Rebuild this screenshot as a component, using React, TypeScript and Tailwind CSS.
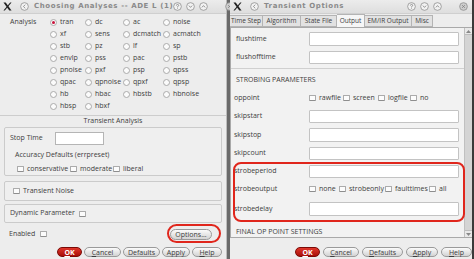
import React from 'react';

const font = "font-['Open_Sans','Noto_Sans',sans-serif]";

function XLogo() {
  return (
    <svg width="9" height="9" viewBox="0 0 10 10" className="shrink-0">
      <path d="M0.5 0.5 L3 0.5 L9.5 9.5 L7 9.5 Z" fill="#222" />
      <path d="M9.5 0.5 L8 0.5 L0.5 9.5 L2 9.5 Z" fill="#222" />
    </svg>
  );
}

function CircleIcon({ kind }: { kind: 'left' | 'help' | 'down' | 'up' | 'close' }) {
  const filled = kind === 'close';
  return (
    <svg width="9" height="9" viewBox="0 0 10 10" className="shrink-0">
      <circle cx="5" cy="5" r="4.3" fill={filled ? '#cdcdcd' : '#f2f2f2'} stroke="#919191" strokeWidth="0.9" />
      {kind === 'left' && <path d="M5.8 3 L3.8 5 L5.8 7" fill="none" stroke="#808080" strokeWidth="0.9" />}
      {kind === 'help' && (
        <>
          <path d="M3.7 4 Q3.8 2.7 5 2.7 Q6.3 2.7 6.3 3.9 Q6.3 4.7 5 5.2 L5 6" fill="none" stroke="#808080" strokeWidth="0.9" />
          <circle cx="5" cy="7.2" r="0.5" fill="#808080" />
        </>
      )}
      {kind === 'down' && <path d="M3.2 4 L5 6 L6.8 4" fill="none" stroke="#808080" strokeWidth="0.9" />}
      {kind === 'up' && <path d="M3.2 6 L5 4 L6.8 6" fill="none" stroke="#808080" strokeWidth="0.9" />}
      {kind === 'close' && <path d="M3.5 3.5 L6.5 6.5 M6.5 3.5 L3.5 6.5" fill="none" stroke="#808080" strokeWidth="0.9" />}
    </svg>
  );
}

function Radio({ on = false }: { on?: boolean }) {
  return (
    <span className="w-[7px] h-[7px] rounded-full border border-[#ababab] bg-[#fbfbfb] flex items-center justify-center shrink-0">
      {on && <span className="w-[3px] h-[3px] rounded-full bg-[#c8143c]" />}
    </span>
  );
}

function Check() {
  return <span className="w-[7px] h-[6px] border border-[#ababab] border-b-[#8e8e8e] bg-[#fcfcfc] rounded-[1px] shrink-0" />;
}

function Btn({ label, u, red = false, w }: { label: string; u?: number; red?: boolean; w: string }) {
  const text =
    u === undefined ? (
      label
    ) : (
      <>
        {label.slice(0, u)}
        <span className="underline">{label[u]}</span>
        {label.slice(u + 1)}
      </>
    );
  return (
    <div
      className={`${w} h-[10px] rounded-full flex items-center justify-center text-[7px] leading-none ${
        red
          ? 'bg-gradient-to-b from-[#e0352a] to-[#a80d08] border border-[#7a0a06] text-white font-bold'
          : 'bg-gradient-to-b from-[#fbfbfb] to-[#d3d3d3] border border-[#9a9a9a] text-[#3d3d3d]'
      }`}
    >
      {text}
    </div>
  );
}

function TitleBar({ title }: { title: string }) {
  return (
    <div className="h-[14px] flex items-center bg-gradient-to-b from-[#ececec] to-[#dedede] border-b border-[#cfcfcf] pl-[3px] pr-[4px]">
      <XLogo />
      <div className="ml-[8px]">
        <CircleIcon kind="left" />
      </div>
      <span className="ml-[5px] text-[7px] font-bold tracking-[0.6px] text-[#8a8a8a] font-['DejaVu_Sans',sans-serif] whitespace-nowrap">
        {title}
      </span>
      <div className="flex-1" />
      <div className="flex gap-[4px]">
        <CircleIcon kind="help" />
        <CircleIcon kind="down" />
        <CircleIcon kind="up" />
      </div>
      <div className="ml-[17px]">
        <CircleIcon kind="close" />
      </div>
    </div>
  );
}

const analyses = [
  ['tran', 'dc', 'ac', 'noise'],
  ['xf', 'sens', 'dcmatch', 'acmatch'],
  ['stb', 'pz', 'lf', 'sp'],
  ['envlp', 'pss', 'pac', 'pstb'],
  ['pnoise', 'pxf', 'psp', 'qpss'],
  ['qpac', 'qpnoise', 'qpxf', 'qpsp'],
  ['hb', 'hbac', 'hbstb', 'hbnoise'],
  ['hbsp', 'hbxf'],
];
const colW = ['w-[35px]', 'w-[38px]', 'w-[40px]', 'w-[50px]'];

function LeftWindow() {
  return (
    <div className="relative w-[227px] h-full bg-[#ededed] border-r border-[#bdbdbd] flex flex-col text-[#3d3d3d]">
      <TitleBar title="Choosing Analyses -- ADE L (1)" />
      <div className="flex pt-[2px]">
        <div className="w-[48px] pl-[10px] h-[12px] flex items-center text-[7px]">Analysis</div>
        <div className="flex flex-col">
          {analyses.map((row, r) => (
            <div key={r} className="flex h-[12px] items-center">
              {row.map((a, c) => (
                <div key={a} className={`${colW[c]} flex items-center gap-[3px] pl-[2px] text-[7px]`}>
                  <Radio on={a === 'tran'} />
                  <span>{a}</span>
                </div>
              ))}
            </div>
          ))}
        </div>
      </div>
      <div className="mt-[3px] border-t border-[#cdcdcd]" />
      <div className="h-[10px] flex items-center justify-center text-[7px]">Transient Analysis</div>
      <div className="mx-[4px] mt-[1px] h-[49px] border border-[#cbcbcb] rounded-[2px] bg-[#efefef] flex flex-col">
        <div className="mt-[4px] h-[13px] flex items-center">
          <span className="w-[50px] pl-[5px] text-[7px]">Stop Time</span>
          <div className="w-[49px] h-[13px] bg-white border border-[#b5b5b5]" />
        </div>
        <div className="mt-[5px] h-[10px] pl-[10px] flex items-center text-[7px]">Accuracy Defaults (errpreset)</div>
        <div className="mt-[4px] h-[10px] flex items-center text-[7px] pl-[12px]">
          <Check />
          <span className="ml-[3px] w-[43px]">conservative</span>
          <Check />
          <span className="ml-[3px] w-[33px]">moderate</span>
          <Check />
          <span className="ml-[3px]">liberal</span>
        </div>
      </div>
      <div className="mx-[4px] mt-[5px] h-[20px] border border-[#cbcbcb] rounded-[2px] bg-[#efefef] flex items-center pl-[8px] text-[7px]">
        <Check />
        <span className="ml-[3px]">Transient Noise</span>
      </div>
      <div className="mx-[4px] mt-[3px] h-[19px] border border-[#cbcbcb] rounded-[2px] bg-[#efefef] flex items-center pl-[5px] text-[7px]">
        <span className="w-[69px]">Dynamic Parameter</span>
        <Check />
      </div>
      <div className="mt-[5px] h-[12px] flex items-center text-[7px] pl-[9px] pr-[14px]">
        <span className="w-[31px]">Enabled</span>
        <Check />
        <div className="flex-1" />
        <Btn label="Options..." w="w-[42px] h-[11px]" />
      </div>
      <div className="mt-[7px] flex items-center justify-end gap-[2px] pr-[4px]">
        <Btn label="OK" u={0} red w="w-[25px]" />
        <Btn label="Cancel" u={0} w="w-[37px]" />
        <Btn label="Defaults" w="w-[37px]" />
        <Btn label="Apply" w="w-[28px]" />
        <Btn label="Help" u={0} w="w-[30px]" />
      </div>
      <div className="absolute left-[167px] top-[224px] w-[54px] h-[19px] rounded-full border-2 border-[#e0261c]" />
    </div>
  );
}

const tabs = [
  { t: 'Time Step', w: 'w-[33px]' },
  { t: 'Algorithm', w: 'w-[38px]' },
  { t: 'State File', w: 'w-[36px]' },
  { t: 'Output', w: 'w-[28px]', active: true },
  { t: 'EM/IR Output', w: 'w-[47px]' },
  { t: 'Misc', w: 'w-[21px]' },
];

function Field({ label, h = 'h-[13px]', mt, pl = 'pl-[3px]' }: { label: string; h?: string; mt: string; pl?: string }) {
  return (
    <div className={`${mt} ${h} flex items-center`}>
      <span className={`w-[78px] ${pl} text-[7px]`}>{label}</span>
      <div className={`w-[150px] ${h} bg-white border border-[#c3c3c3] rounded-[1px]`} />
    </div>
  );
}

function RightWindow() {
  return (
    <div className="relative flex-1 h-full bg-[#ededed] flex flex-col text-[#3d3d3d] border-r-2 border-[#3a3a3a]">
      <TitleBar title="Transient Options" />
      <div className="h-[13px] flex items-end">
        {tabs.map((tb) => (
          <div
            key={tb.t}
            className={`${tb.w} shrink-0 whitespace-nowrap flex items-center justify-center text-[6.5px] border border-[#b4b4b4] border-l-0 ${
              tb.active ? 'h-[13px] bg-[#f6f6f6] border-b-0' : 'h-[12px] bg-[#e2e2e2]'
            }`}
          >
            {tb.t}
          </div>
        ))}
      </div>
      <div className="h-[211px] flex border-t border-[#a9a9a9] border-l border-b bg-[#f2f2f2]">
        <div className="flex-1 flex flex-col">
          <Field label="flushtime" h="h-[14px]" mt="mt-[4px]" pl="pl-[5px]" />
          <Field label="flushofftime" mt="mt-[5px]" pl="pl-[5px]" />
          <div className="mt-[4px] border-t border-[#d0d0d0]" />
          <div className="mt-[6px] h-[10px] flex items-center pl-[5px] text-[7px]">STROBING PARAMETERS</div>
          <div className="mt-[8px] h-[10px] flex items-center text-[7px]">
            <span className="w-[78px] pl-[3px]">oppoint</span>
            {['rawfile', 'screen', 'logfile', 'no'].map((it, i) => (
              <div key={it} className={`${['w-[34px]', 'w-[35px]', 'w-[32px]', 'w-[20px]'][i]} flex items-center gap-[3px]`}>
                <Check />
                <span>{it}</span>
              </div>
            ))}
          </div>
          <Field label="skipstart" mt="mt-[7px]" />
          <Field label="skipstop" h="h-[14px]" mt="mt-[5px]" />
          <Field label="skipcount" mt="mt-[5px]" />
          <Field label="strobeperiod" mt="mt-[5px]" />
          <div className="mt-[6px] h-[10px] flex items-center text-[7px]">
            <span className="w-[78px] pl-[3px]">strobeoutput</span>
            {['none', 'strobeonly', 'faulttimes', 'all'].map((it, i) => (
              <div key={it} className={`${['w-[30px]', 'w-[46px]', 'w-[44px]', 'w-[20px]'][i]} flex items-center gap-[3px]`}>
                <Check />
                <span>{it}</span>
              </div>
            ))}
          </div>
          <Field label="strobedelay" h="h-[14px]" mt="mt-[8px]" />
          <div className="mt-[11px] h-[10px] flex items-center pl-[5px] text-[7px]">FINAL OP POINT SETTINGS</div>
        </div>
        <div className="w-[8px] bg-[#d4d4d4] border-l border-[#c0c0c0] flex flex-col justify-between">
          <div className="h-[7px] bg-[#e9e9e9] border-b border-[#bcbcbc] flex items-center justify-center">
            <svg width="5" height="3" viewBox="0 0 5 3"><path d="M0 3 L2.5 0 L5 3 Z" fill="#888" /></svg>
          </div>
          <div className="h-[7px] bg-[#e9e9e9] border-t border-[#bcbcbc] flex items-center justify-center">
            <svg width="5" height="3" viewBox="0 0 5 3"><path d="M0 0 L2.5 3 L5 0 Z" fill="#888" /></svg>
          </div>
        </div>
      </div>
      <div className="mt-[9px] flex items-center justify-end gap-[3px]">
        <Btn label="OK" u={0} red w="w-[25px]" />
        <Btn label="Cancel" u={0} w="w-[36px]" />
        <Btn label="Defaults" u={0} w="w-[41px]" />
        <Btn label="Apply" u={0} w="w-[32px]" />
        <Btn label="Help" u={0} w="w-[31px]" />
      </div>
      <div className="absolute left-[3px] top-[162px] w-[232px] h-[60px] rounded-[8px] border-2 border-[#e0261c]" />
    </div>
  );
}

export default function App() {
  return (
    <div className={`w-[474px] h-[259px] overflow-hidden flex bg-[#5e5e5e] ${font}`}>
      <LeftWindow />
      <div className="w-[3px] bg-[#6a6a6a]" />
      <RightWindow />
    </div>
  );
}
